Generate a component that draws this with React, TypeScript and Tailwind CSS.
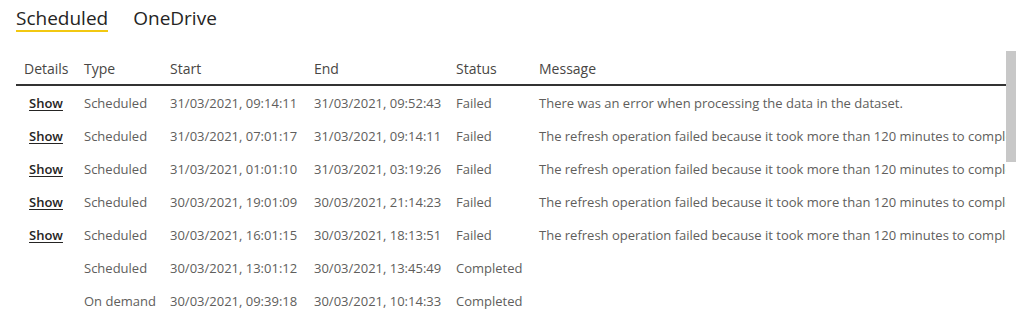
import React from 'react';

interface RefreshRow {
  show: boolean;
  type: string;
  start: string;
  end: string;
  status: string;
  message: string;
}

const rows: RefreshRow[] = [
  { show: true, type: 'Scheduled', start: '31/03/2021, 09:14:11', end: '31/03/2021, 09:52:43', status: 'Failed', message: 'There was an error when processing the data in the dataset.' },
  { show: true, type: 'Scheduled', start: '31/03/2021, 07:01:17', end: '31/03/2021, 09:14:11', status: 'Failed', message: 'The refresh operation failed because it took more than 120 minutes to complete. Consider reducing the size of your dataset.' },
  { show: true, type: 'Scheduled', start: '31/03/2021, 01:01:10', end: '31/03/2021, 03:19:26', status: 'Failed', message: 'The refresh operation failed because it took more than 120 minutes to complete. Consider reducing the size of your dataset.' },
  { show: true, type: 'Scheduled', start: '30/03/2021, 19:01:09', end: '30/03/2021, 21:14:23', status: 'Failed', message: 'The refresh operation failed because it took more than 120 minutes to complete. Consider reducing the size of your dataset.' },
  { show: true, type: 'Scheduled', start: '30/03/2021, 16:01:15', end: '30/03/2021, 18:13:51', status: 'Failed', message: 'The refresh operation failed because it took more than 120 minutes to complete. Consider reducing the size of your dataset.' },
  { show: false, type: 'Scheduled', start: '30/03/2021, 13:01:12', end: '30/03/2021, 13:45:49', status: 'Completed', message: '' },
  { show: false, type: 'On demand', start: '30/03/2021, 09:39:18', end: '30/03/2021, 10:14:33', status: 'Completed', message: '' },
];

const App: React.FC = () => {
  return (
    <div
      className="w-[1019px] h-[319px] bg-white overflow-hidden relative"
      style={{ fontFamily: '"Open Sans", "Noto Sans", sans-serif' }}
    >
      {/* Tabs */}
      <div className="flex gap-[25px] pl-4 pt-[6px] h-[52px]">
        <div className="text-[19px] leading-[24px] text-[#252423] border-b-2 border-[#f2c811] h-[26px]">
          Scheduled
        </div>
        <div className="text-[19px] leading-[24px] text-[#252423]">OneDrive</div>
      </div>

      {/* Refresh history table */}
      <div className="pl-4 w-[1006px] overflow-hidden">
        <table className="table-fixed w-[1400px] border-collapse text-[13px] text-[#605e5c]">
          <colgroup>
            <col className="w-[60px]" />
            <col className="w-[86px]" />
            <col className="w-[144px]" />
            <col className="w-[142px]" />
            <col className="w-[83px]" />
            <col />
          </colgroup>
          <thead>
            <tr className="h-[33px] border-b-2 border-[#333333] text-[14px] text-[#484644]">
              <th className="font-normal text-left pl-2">Details</th>
              <th className="font-normal text-left pl-2">Type</th>
              <th className="font-normal text-left pl-2">Start</th>
              <th className="font-normal text-left pl-2">End</th>
              <th className="font-normal text-left pl-2">Status</th>
              <th className="font-normal text-left pl-2">Message</th>
            </tr>
          </thead>
          <tbody>
            {rows.map((row, i) => (
              <tr key={i} className="h-[33px]">
                <td className="text-center pt-1">
                  {row.show && (
                    <span className="font-semibold underline underline-offset-2 text-[#252423]">Show</span>
                  )}
                </td>
                <td className="pl-2 pt-1 whitespace-nowrap">{row.type}</td>
                <td className="pl-2 pt-1 whitespace-nowrap">{row.start}</td>
                <td className="pl-2 pt-1 whitespace-nowrap">{row.end}</td>
                <td className="pl-2 pt-1 whitespace-nowrap">{row.status}</td>
                <td className="pl-2 pt-1 whitespace-nowrap">{row.message}</td>
              </tr>
            ))}
          </tbody>
        </table>
      </div>

      {/* Scrollbar thumb */}
      <div className="absolute left-[1006px] top-[51px] w-[10px] h-[111px] bg-[#c8c8c8]" />
    </div>
  );
};

export default App;
